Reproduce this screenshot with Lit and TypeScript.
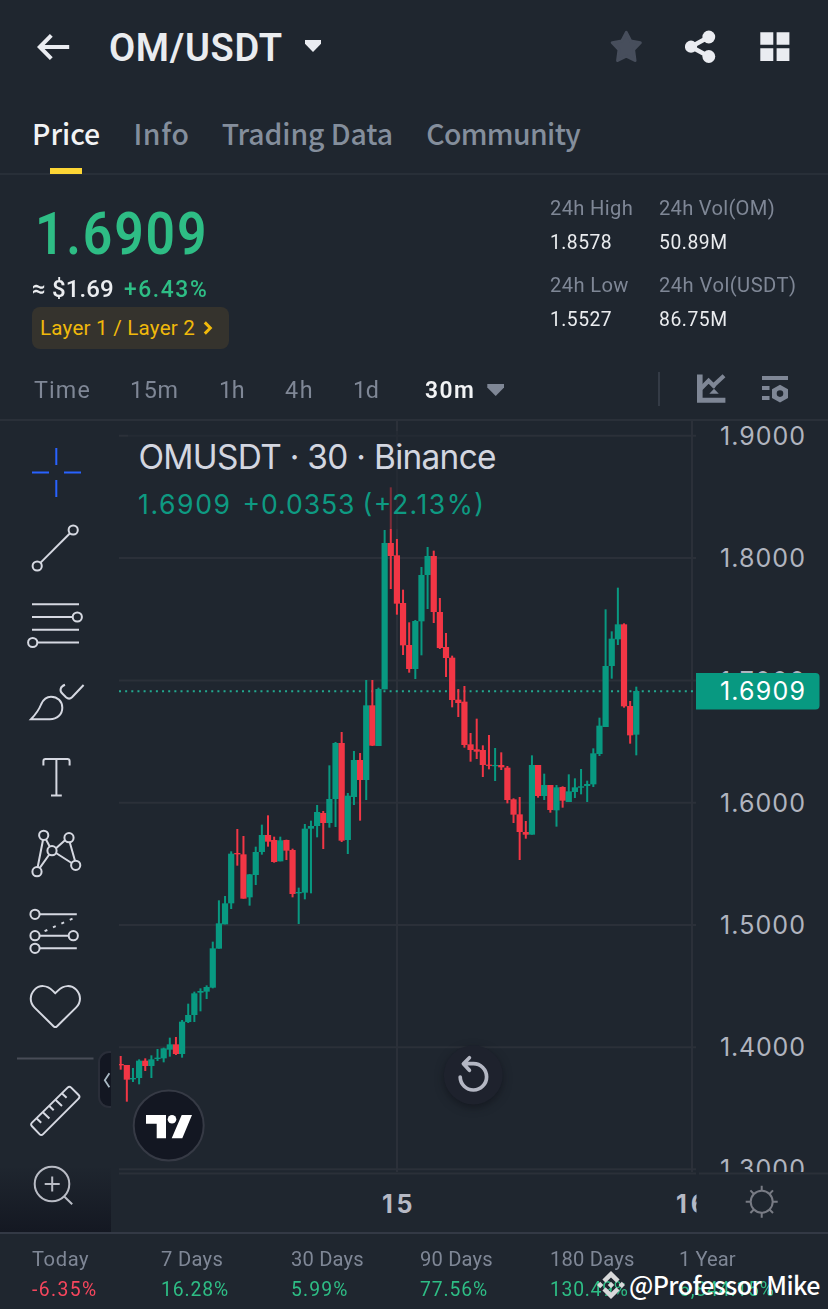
import { LitElement, html, svg, css } from "lit";
import { customElement, property } from "lit/decorators.js";
import { styleMap } from "lit/directives/style-map.js";

type Row = [string, number, number, number, number];

/** Text whose tracking is adjusted so that it fills a given width. */
@customElement("fit-text")
export class FitText extends LitElement {
  @property() text = "";
  @property({ type: Number }) width = 0;
  @property({ type: Number }) squeeze = 1;

  static styles = css`
    :host { display: block; flex: none; white-space: pre; }
    .ink { display: inline-block; transform-origin: 0 50%; }
  `;

  updated() {
    const ink = this.renderRoot.querySelector(".ink") as HTMLElement;
    ink.style.letterSpacing = "0px";
    const gap = (this.width / this.squeeze - ink.offsetWidth) / Math.max(1, this.text.length - 1);
    ink.style.letterSpacing = `${gap.toFixed(3)}px`;
  }

  render() {
    return html`<span class="ink" style=${styleMap({ transform: `scaleX(${this.squeeze})` })}>${this.text}</span>`;
  }
}

const fit = (cls: string, text: string, width: number, squeeze = 1) => html`
  <fit-text class=${cls} .text=${text} .width=${width} .squeeze=${squeeze}
    style=${styleMap({ width: `${width}px` })}></fit-text>`;

// Candles: direction, high, body top, body bottom, low; thirds of a pixel below the run's origin.
const RUNS: { y: number; rows: Row[] }[] = [
  { y: 780, rows: [
    ["r", 828, 852, 856, 869], ["r", 855, 855, 899, 965], ["g", 864, 894, 898, 906], ["g", 838, 842, 894, 913],
    ["r", 835, 842, 858, 873], ["g", 826, 838, 858, 894], ["g", 807, 833, 837, 843], ["g", 803, 805, 835, 847],
    ["g", 773, 793, 809, 830], ["r", 771, 793, 822, 825], ["g", 720, 725, 822, 833], ["g", 671, 705, 726, 729],
    ["g", 635, 640, 705, 726], ["g", 625, 633, 638, 694], ["g", 616, 621, 635, 657], ["g", 485, 505, 623, 625],
    ["g", 361, 430, 506, 506], ["g", 348, 370, 433, 433], ["g", 214, 221, 370, 387], ["r", 147, 219, 223, 257],
    ["r", 168, 223, 356, 356], ["g", 282, 283, 352, 377], ["g", 200, 216, 285, 315], ["g", 134, 165, 216, 224],
    ["r", 106, 165, 185, 200], ["r", 170, 180, 246, 248], ["g", 170, 181, 244, 244], ["r", 179, 180, 212, 240],
    ["r", 206, 210, 342, 352], ["g", 323, 336, 340, 432],
  ] },
  { y: 640, rows: [
    ["g", 552, 566, 758, 778], ["g", 542, 558, 566, 760], ["g", 495, 516, 558, 592], ["r", 513, 519, 549, 627],
    ["g", 376, 477, 549, 563], ["g", 306, 309, 477, 561], ["r", 276, 309, 602, 606], ["g", 459, 467, 600, 642],
    ["g", 333, 360, 471, 495], ["r", 339, 360, 420, 542], ["g", 120, 196, 420, 480], ["r", 120, 196, 317, 318],
    ["g", 143, 147, 318, 318],
  ] },
  { y: 480, rows: [
    ["g", 150, 189, 628, 628], ["r", 22, 189, 228, 327], ["r", 177, 226, 371, 404], ["r", 329, 369, 496, 525],
    ["r", 427, 495, 567, 578], ["g", 420, 423, 567, 597], ["g", 261, 285, 424, 526], ["g", 201, 228, 285, 387],
    ["r", 212, 228, 396, 429], ["r", 354, 396, 504, 507], ["r", 459, 501, 534, 591], ["r", 527, 533, 660, 682],
    ["r", 627, 659, 669, 711], ["r", 618, 665, 795, 803], ["r", 759, 793, 810, 845], ["r", 716, 808, 815, 837],
    ["r", 796, 810, 855, 891], ["r", 765, 854, 857, 868], ["g", 804, 855, 858, 903], ["r", 817, 855, 862, 870],
    ["r", 858, 863, 960, 970], ["r", 955, 958, 1004, 1029], ["r", 951, 1003, 1056, 1140], ["r", 1023, 1056, 1064, 1076],
    ["g", 826, 855, 1064, 1064], ["r", 855, 855, 948, 953], ["g", 881, 915, 948, 960], ["r", 915, 915, 990, 998],
  ] },
  { y: 570, rows: [
    ["g", 645, 652, 721, 770], ["r", 649, 651, 692, 713], ["g", 613, 664, 696, 696], ["g", 625, 652, 666, 684],
    ["g", 597, 649, 653, 673], ["g", 632, 642, 648, 696], ["g", 535, 550, 643, 651], ["g", 443, 467, 552, 558],
    ["g", 118, 288, 471, 471], ["g", 184, 206, 288, 326], ["g", 53, 163, 208, 225], ["r", 160, 163, 409, 413],
    ["r", 393, 408, 496, 521], ["g", 350, 363, 494, 556],
  ] },
];

const CANDLES = RUNS.flatMap((run) =>
  run.rows.map(([dir, ...v]) => ({ dir, v: v.map((n) => run.y + n / 3) })));

const PRICES: [string, number][] = [
  ["1.9000", 435.7], ["1.8000", 558], ["1.7000", 680.5], ["1.6000", 802.7],
  ["1.5000", 925], ["1.4000", 1047.3], ["1.3000", 1169.3],
];

const icon = (x: number, y: number, w: number, h: number, body: unknown, cls = "") =>
  html`<svg class="icon ${cls}" width=${w} height=${h} viewBox="${x} ${y} ${w} ${h}">${body}</svg>`;

const dots = (pts: number[][]) => pts.map(([x, y]) => svg`<circle cx=${x} cy=${y} r="4.6"></circle>`);

@customElement("tool-rail")
export class ToolRail extends LitElement {
  static styles = css`
    :host {
      display: flex; flex-direction: column; width: 111px; height: 811px; flex: none; position: relative;
      background: linear-gradient(to bottom, transparent 745px, #141822 811px);
    }
    .icon { display: block; flex: none; fill: none; stroke: #d5d8e1; stroke-width: 2; }
    .active { stroke: #2962ff; }
    .rule { stroke: #484c57; }
    .faded { stroke: #b9bcc5; }
    .tab {
      position: absolute; left: 98px; top: 630px; width: 13px; height: 57px; box-sizing: border-box;
      border: 2px solid #2a2e39; border-right: 0; border-radius: 11px 0 0 11px; background: #131722;
    }
    .tab svg { display: block; margin: 19px 0 0 3px; fill: none; stroke: #a9b9c4; stroke-width: 1.8; }
  `;

  render() {
    return html`
      ${icon(0, 421, 111, 90, svg`<path d="M56.3 448v17M56.3 480v17M32 472.6h17M64 472.6h17"></path>`, "active")}
      ${icon(0, 511, 111, 76, svg`<path d="M40.6 562.6L70 533.3"></path>${dots([[37.2, 566], [73.2, 530]])}`)}
      ${icon(0, 587, 111, 76, svg`<path d="M32 604.3h47M32 617h40.5M32 629.8h47M37.5 642.5H79"></path>${dots([[77.3, 617], [32.7, 642.5]])}`)}
      ${icon(0, 663, 111, 77, svg`<path d="M31 719.2C36.5 713.5 39.5 708.5 41.3 704C43.5 699 46.5 696.7 51 696.7C57.5 696.7 62.3 701.2 62.3 707.7C62.3 714.6 57 719.2 50 719.2Z"></path>
        <path d="M65 684.8C60.2 686.6 59.2 690.4 62.3 693.5L66 697.2C68 699 70.2 699 72 697.2L83.6 685"></path>`)}
      ${icon(0, 740, 111, 76, svg`<path d="M43.4 765.5v-4.3q0-2.2 2.2-2.2h21.8q2.2 0 2.2 2.2v4.3M56.4 759v36.4M51 795.4h10.8"></path>`)}
      ${icon(0, 816, 111, 77, svg`<path d="M43 840L37.7 867M46 839.5L49.7 846.5M56 848.3L65 840.3M69.8 842.4L75 860.7M56 853L71.6 863M49.3 854.5L39.8 867.8"></path>
        ${dots([[43.7, 835.3], [69, 837.7], [52, 850.7], [37, 871.7], [75.7, 865.3]])}`)}
      ${icon(0, 893, 111, 77, svg`<path d="M39.8 914.3h37M39.8 935.7h28.8M39.8 948.3h37"></path>
        <path d="M44.6 931.2L73 918.4" stroke-dasharray="3 6.2"></path>
        ${dots([[35, 914.3], [35, 935.7], [35, 948.3], [73.3, 935.7]])}`)}
      ${icon(0, 970, 111, 77, svg`<path d="M55.3 993.2L52.6 990.6C47 985 39.5 984.6 34.6 989.6C29.5 995 29.4 1002.3 34.6 1007.6L53.5 1026.2Q55.3 1027.9 57.1 1026.2L76 1007.6C81.3 1002.3 81.2 995 76.2 989.6C71.2 984.6 63.6 985 58 990.6Z"></path>`)}
      ${icon(0, 1047, 111, 25, svg`<path d="M17 1058.5h76.5"></path>`, "rule")}
      ${icon(0, 1072, 111, 76, svg`<path d="M67.6 1087.6Q69.4 1085.8 71.2 1087.6L78.6 1095Q80.4 1096.8 78.6 1098.6L43.1 1134.1Q41.3 1135.9 39.5 1134.1L32 1126.2Q30.2 1124.4 32 1122.6Z"></path>
        <path d="M36.5 1118.3L41.2 1122.8M42.6 1112L49.4 1118.4M49.1 1105.8L53.7 1110.3M55.2 1099.6L62 1106M61.8 1093.2L66.6 1097.8"></path>`)}
      ${icon(0, 1148, 111, 84, svg`<circle cx="52" cy="1184" r="17.3"></circle><path d="M44.7 1184h15M52.2 1176.5v15M64 1196.3l8.2 8"></path>`, "faded")}
      <div class="tab"><svg width="8" height="16" viewBox="103 1072 8 16"><path d="M109.4 1073.3L104.8 1080.2L109.4 1087.2"></path></svg></div>
    `;
  }
}

@customElement("price-chart")
export class PriceChart extends LitElement {
  static styles = css`
    :host { display: block; width: 717px; height: 811px; font-family: Inter, "Liberation Sans", sans-serif; }
    svg { display: block; }
    .grid { stroke: #2b3039; stroke-width: 2; }
    .g { fill: #089981; }
    .r { fill: #f23645; }
    .last { stroke: #22a88f; stroke-width: 2; stroke-dasharray: 2 4.15; }
    .veil { fill: #1f262f; opacity: 0.55; }
    .title { fill: #d3d6e0; font-size: 33.4px; }
    .change { fill: #0e9a82; font-size: 26.6px; }
    .axis { fill: #b0b4bf; font-size: 25px; }
    .now { fill: #fff; font-size: 25px; }
    .day { fill: #b6b9c4; font-size: 25px; font-weight: 700; }
    .logo { fill: #131722; stroke: #363a45; stroke-width: 2; }
    .white { fill: #fff; }
    .reset { fill: #1e222d; filter: drop-shadow(0 3px 4px rgba(10, 12, 18, 0.5)); }
    .arrow { fill: none; stroke: #b4b7c3; stroke-width: 3.7; stroke-linecap: round; stroke-linejoin: round; }
    .sun { fill: none; stroke: #787b84; stroke-width: 2; }
  `;

  render() {
    const rays = Array.from({ length: 8 }, (_, i) => {
      const a = (i * Math.PI) / 4;
      return `M${761.7 + 11 * Math.cos(a)} ${1201.7 + 11 * Math.sin(a)}L${761.7 + 16 * Math.cos(a)} ${1201.7 + 16 * Math.sin(a)}`;
    }).join("");
    return html`
      <svg width="717" height="811" viewBox="111 421 717 811">
        <defs>
          <clipPath id="scale"><rect x="696" y="421" width="132" height="751"></rect></clipPath>
          <clipPath id="days"><rect x="119" y="1172" width="577.5" height="60"></rect></clipPath>
        </defs>
        <g class="grid">
          ${PRICES.map(([, y]) => svg`<path d="M119 ${y}H696"></path>`)}
          <path d="M397 421V1172M692 421V1172M119 1173.5H696M699 1173.5H828"></path>
        </g>
        <path class="last" d="M119 691.3H696"></path>
        ${CANDLES.map(({ dir, v }, i) => {
          const x = 120.7 + i * 6.138;
          return svg`<g class=${dir}>
            <rect x=${x - 1} y=${v[0]} width="2" height=${v[3] - v[0]}></rect>
            <rect x=${Math.max(119, x - 3.1)} y=${v[1]} width=${i ? 6.2 : 4.8} height=${Math.max(1.2, v[2] - v[1])}></rect>
          </g>`;
        })}
        <rect class="veil" x="128" y="431" width="372" height="98"></rect>
        <text class="title" x="138.5" y="469" textLength="358">OMUSDT · 30 · Binance</text>
        <text class="change" x="138" y="514" textLength="92">1.6909</text>
        <text class="change" x="242.5" y="514" textLength="112">+0.0353</text>
        <text class="change" x="362.5" y="514" textLength="121.5">(+2.13%)</text>
        <g clip-path="url(#scale)">
          ${PRICES.map(([t, y]) => svg`<text class="axis" x="720" y=${y + 9} textLength="85">${t}</text>`)}
        </g>
        <path class="g" d="M696 673H815.5Q819.5 673 819.5 677V705.5Q819.5 709.5 815.5 709.5H696Z"></path>
        <text class="now" x="720" y="700" textLength="85">1.6909</text>
        <g clip-path="url(#days)">
          <text class="day" x="382" y="1212.5" textLength="30.5">15</text>
          <text class="day" x="676" y="1212.5" textLength="31">16</text>
        </g>
        <circle class="logo" cx="168.7" cy="1125.5" r="35"></circle>
        <path class="white" d="M146 1115H166V1138.3H156.7V1123.7H146ZM181.7 1115H192L182.3 1138.3H171.7Z"></path>
        <circle class="white" cx="172" cy="1119.3" r="4.3"></circle>
        <circle class="reset" cx="473.3" cy="1075" r="29.5"></circle>
        <path class="arrow" d="M460.2 1077A13.2 13.2 0 1 0 473.4 1063.6H464M469.4 1057.8L463.4 1063.8L469.4 1070.3"></path>
        <circle class="sun" cx="761.7" cy="1201.7" r="11"></circle>
        <path class="sun" d=${rays}></path>
      </svg>
    `;
  }
}

@customElement("app-root")
export class AppRoot extends LitElement {
  static styles = css`
    :host {
      display: flex; flex-direction: column; width: 828px; height: 1309px; overflow: hidden; position: relative;
      background: #1f262f; color: #eaecef; font-family: Roboto, "Noto Sans", sans-serif;
    }
    .icon { display: block; flex: none; }
    .light { fill: #eaecf1; stroke: #eaecf1; }
    .mute { fill: #7f8796; stroke: #7f8796; }
    .head { display: flex; align-items: center; height: 94px; box-sizing: border-box; padding: 0 38px 0 37px; flex: none; }
    .pair { font-size: 38px; font-weight: 600; line-height: 44px; margin: 2px 22px 0 39px; }
    .actions { display: flex; gap: 43px; margin-left: auto; align-items: center; }
    .tabs { display: flex; gap: 33.4px; height: 81px; box-sizing: border-box; padding-left: 32px; border-bottom: 2px solid #282f38; flex: none; }
    .tab { display: flex; flex-direction: column; align-items: center; justify-content: space-between; color: #848e9c; padding-top: 19px; }
    .tab fit-text { font-family: "Noto Sans CJK SC", Roboto, sans-serif; font-size: 28.4px; line-height: 40px; font-weight: 500; }
    .current { color: #f2f3f5; }
    .mark { width: 32px; height: 6px; background: #fcd535; margin-bottom: -1px; }
    .summary { display: flex; justify-content: space-between; height: 185px; box-sizing: border-box; padding: 16px 32px 0; flex: none; }
    .big { font-size: 60px; line-height: 60px; font-weight: 600; color: #2ebd85; margin: 13px 0 0 3px; }
    .sub { display: flex; gap: 10px; margin-top: 10px; font-size: 24.8px; line-height: 30px; font-weight: 500; }
    .up { color: #2ebd85; }
    .down { color: #f6465d; }
    .badge { display: flex; align-items: center; width: 197px; height: 42px; margin-top: 3px; box-sizing: border-box; padding-left: 8px; gap: 7px; border-radius: 8px; background: #35332d; color: #f0b90b; }
    .badge fit-text { font-size: 20.6px; line-height: 24px; }
    .gold { fill: none; stroke: #f0b90b; stroke-width: 3; }
    .stats { display: grid; grid-template-columns: 109.5px 137px; row-gap: 8.5px; align-content: start; }
    .stats fit-text { font-size: 21px; line-height: 34px; }
    .label { color: #7f8796; }
    .frames { display: flex; align-items: center; height: 61px; box-sizing: border-box; padding: 0 39px 0 34px; border-bottom: 2px solid #2a3039; color: #7f8796; flex: none; }
    .frames fit-text { font-size: 24.8px; line-height: 30px; font-weight: 400; }
    .set { display: flex; align-items: center; gap: 40.2px; }
    .frames .chosen { color: #f2f3f5; font-weight: 600; margin: 0 13px 0 46px; }
    .end { display: flex; align-items: center; margin-left: auto; gap: 36px; }
    .end .icon { margin-top: -2px; }
    .bar { width: 2px; height: 34px; background: #343b46; margin: -2px 1px 0 0; }
    .body { display: flex; height: 811px; flex: none; }
    .periods { display: grid; grid-template-columns: repeat(6, 129.4px); height: 77px; box-sizing: border-box; padding: 10px 0 0 32px; border-top: 2px solid #333945; flex: none; }
    .periods fit-text { font-size: 21px; line-height: 30px; }
    .credit { position: absolute; left: 597px; top: 1268px; display: flex; align-items: center; gap: 4px; height: 34px; color: #fff; }
    .credit fit-text { font-family: "Noto Sans CJK SC", "Noto Sans", sans-serif; font-size: 25px; line-height: 34px; font-weight: 500; margin-top: -3px; }
    .silver { fill: #d8d9da; }
  `;

  render() {
    const tabs: [string, number][] = [["Price", 68], ["Info", 55], ["Trading Data", 171], ["Community", 155]];
    const frames: [string, number][] = [["Time", 56], ["15m", 48.4], ["1h", 26], ["4h", 28], ["1d", 26]];
    const stats: [string, number, string, number][] = [
      ["24h High", 83, "1.8578", 62], ["24h Vol(OM)", 116, "50.89M", 68],
      ["24h Low", 78, "1.5527", 62], ["24h Vol(USDT)", 137, "86.75M", 68],
    ];
    const periods: [string, number, string, number][] = [
      ["Today", 57, "-6.35%", 64], ["7 Days", 62, "16.28%", 67], ["30 Days", 73, "5.99%", 56],
      ["90 Days", 73, "77.56%", 67], ["180 Days", 84, "130.49%", 78], ["1 Year", 57, "6,844.15%", 95],
    ];
    return html`
      <div class="head">
        ${icon(37, 33, 33, 27, svg`<path fill="none" stroke-width="4" d="M69.2 46H40M51.3 34.4L39.8 46L51.3 57.6"></path>`, "light")}
        ${fit("pair", "OM/USDT", 173)}
        ${icon(304, 39, 18, 16, svg`<path stroke="none" d="M305 40H321V43.7L313 52L305 43.7Z"></path>`, "light")}
        <div class="actions">
          ${icon(610, 30, 32, 34, svg`<path fill="#474e5c" stroke="#474e5c" stroke-width="3" stroke-linejoin="round" d="M626.3 32.4L630.7 41L640.3 42.7L633.6 49.6L635 60.5L626.3 56.2L617.6 60.5L619 49.6L612.3 42.7L621.9 41Z"></path>`)}
          ${icon(685, 30, 32, 34, svg`<circle stroke="none" cx="691" cy="46.7" r="6.1"></circle><circle stroke="none" cx="708.8" cy="37" r="6.4"></circle><circle stroke="none" cx="708.8" cy="56.5" r="6.4"></circle><path fill="none" stroke-width="4.4" d="M708.8 37L691 46.7L708.8 56.5"></path>`, "light")}
          ${icon(760, 30, 30, 34, svg`<path stroke="none" d="M760.3 32.3h13v12.5h-13zM776.6 32.3h12.8v12.5h-12.8zM760.3 48.2h13v12.8h-13zM776.6 48.2h12.8v12.8h-12.8z"></path>`, "light")}
        </div>
      </div>
      <div class="tabs">
        ${tabs.map(([t, w], i) => html`<div class="tab ${i ? "" : "current"}">${fit("", t, w)}${i ? "" : html`<div class="mark"></div>`}</div>`)}
      </div>
      <div class="summary">
        <div>
          ${fit("big", "1.6909", 171, 0.86)}
          <div class="sub">${fit("", "≈ $1.69", 82, 0.97)}${fit("up", "+6.43%", 82.5, 0.92)}</div>
          <div class="badge">${fit("", "Layer 1 / Layer 2", 154.5)}
            ${icon(202, 320, 12, 16, svg`<path d="M204.8 322.4L210.3 328L204.8 333.6"></path>`, "gold")}</div>
        </div>
        <div class="stats">
          ${stats.map(([a, aw, b, bw]) => html`<div>${fit("label", a, aw, 0.96)}${fit("", b, bw, 0.92)}</div>`)}
        </div>
      </div>
      <div class="frames">
        <div class="set">${frames.map(([t, w]) => fit("", t, w, 0.94))}</div>
        ${fit("chosen", "30m", 49, 0.92)}
        ${icon(487, 381, 18, 16, svg`<path stroke="none" d="M487.3 383H504V386.5L495.7 395L487.3 386.5Z"></path>`, "mute")}
        <div class="end">
          <div class="bar"></div>
          ${icon(697, 373, 29, 32, svg`<path stroke="none" d="M697 374.5H702.6V397.8H725.4V402.8H697ZM709.3 393.8L714 388.8L718.8 393.8ZM712 386.2H716L714 388.8Z"></path><path fill="none" stroke-width="4.2" d="M701 388.5L708.6 380.8L713.4 385.6L724 375.8"></path>`, "mute")}
          ${icon(762, 373, 27, 32, svg`<path stroke="none" fill-rule="evenodd" d="M762 376H788V380H762ZM762 386H769.5V390H762ZM762 396H769.5V400H762ZM780 384.8L788 389.2V398L780 402.5L772 398V389.2ZM780 390.3A3.3 3.3 0 1 0 780 396.9A3.3 3.3 0 1 0 780 390.3Z"></path>`, "mute")}
        </div>
      </div>
      <div class="body">
        <tool-rail></tool-rail>
        <price-chart></price-chart>
      </div>
      <div class="periods">
        ${periods.map(([a, aw, b, bw], i) => html`<div>${fit("label", a, aw, 0.96)}${fit(i ? "up" : "down", b, bw, 0.92)}</div>`)}
      </div>
      <div class="credit">
        ${icon(597, 1271, 28, 28, svg`<path d="M611 1271L619.6 1279.6L616.4 1282.8L611 1277.4L605.6 1282.8L602.4 1279.6ZM600.2 1281.8L603.4 1285L600.2 1288.2L597 1285ZM611 1281.8L614.2 1285L611 1288.2L607.8 1285ZM621.8 1281.8L625 1285L621.8 1288.2L618.6 1285ZM605.6 1287.2L611 1292.6L616.4 1287.2L619.6 1290.4L611 1299L602.4 1290.4Z"></path>`, "silver")}
        ${fit("", "@Professor Mike", 191)}
      </div>
    `;
  }
}
